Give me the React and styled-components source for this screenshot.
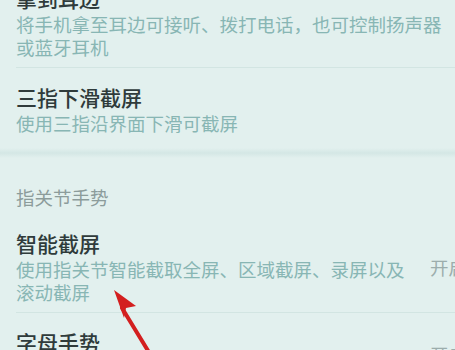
import React from 'react';
import styled, { createGlobalStyle } from 'styled-components';

const GlobalStyle = createGlobalStyle`
    html, body {
        margin: 0;
        padding: 0;
        overflow: hidden;
        background-color: #e2f0ee;
    }
    body {
        font-family: "Noto Sans CJK SC", "Noto Sans", sans-serif;
    }
`

const Page = styled.div`
    position: relative;
    width: 455px;
    height: 350px;
    overflow: hidden;
    background-color: #e2f0ee;
`

const List = styled.div`
    display: flex;
    flex-direction: column;
    margin-top: -31px;
    padding-left: 16px;
`

const Item = styled.div`
    display: flex;
    align-items: center;
    padding: 16px 0 8px;
    border-bottom: ${props => props.divider ? '1px solid #d2e5e2' : 'none'};
`

const TextCol = styled.div`
    display: flex;
    flex-direction: column;
    gap: 2px;
    width: ${props => props.narrow ? '400px' : '439px'};
    flex-shrink: 0;
`

const Title = styled.div`
    font-size: 21px;
    line-height: 26px;
    font-weight: 500;
    color: #2f3b3b;
    white-space: nowrap;
`

const Sub = styled.div`
    font-size: 18.5px;
    line-height: 23px;
    color: #88b6b4;
`

const Status = styled.div`
    margin-left: 14px;
    font-size: 18.5px;
    line-height: 23px;
    color: #9cadac;
    white-space: nowrap;
    flex-shrink: 0;
`

const Band = styled.div`
    margin: 5px -16px 0;
    height: 10px;
    background: linear-gradient(to bottom, #e2f0ee, #d4e7e5 50%, #e2f0ee);
`

const Header = styled.div`
    padding: 28px 0 5px;
    font-size: 18.5px;
    line-height: 23px;
    color: #8c9c9b;
`

const Arrow = styled.svg`
    position: absolute;
    left: 100px;
    top: 284px;
    width: 70px;
    height: 70px;
`

export default function App() {
    return (
        <Page>
            <GlobalStyle />
            <List>
                <Item divider>
                    <TextCol>
                        <Title>拿到耳边</Title>
                        <Sub>将手机拿至耳边可接听、拨打电话，也可控制扬声器或蓝牙耳机</Sub>
                    </TextCol>
                </Item>
                <Item>
                    <TextCol>
                        <Title>三指下滑截屏</Title>
                        <Sub>使用三指沿界面下滑可截屏</Sub>
                    </TextCol>
                </Item>
                <Band />
                <Header>指关节手势</Header>
                <Item divider>
                    <TextCol narrow>
                        <Title>智能截屏</Title>
                        <Sub>使用指关节智能截取全屏、区域截屏、录屏以及滚动截屏</Sub>
                    </TextCol>
                    <Status>开启 ›</Status>
                </Item>
                <Item>
                    <TextCol narrow>
                        <Title>字母手势</Title>
                        <Sub>使用指关节画字母</Sub>
                    </TextCol>
                    <Status>开启 ›</Status>
                </Item>
            </List>
            <Arrow viewBox="0 0 70 70">
                <path d="M 50 70 L 22 24" stroke="#d31f1f" strokeWidth="4" strokeLinecap="round" fill="none" />
                <path d="M 14 6 L 36 22 L 26 24 L 24 34 Z" fill="#d31f1f" />
            </Arrow>
        </Page>
    );
}
